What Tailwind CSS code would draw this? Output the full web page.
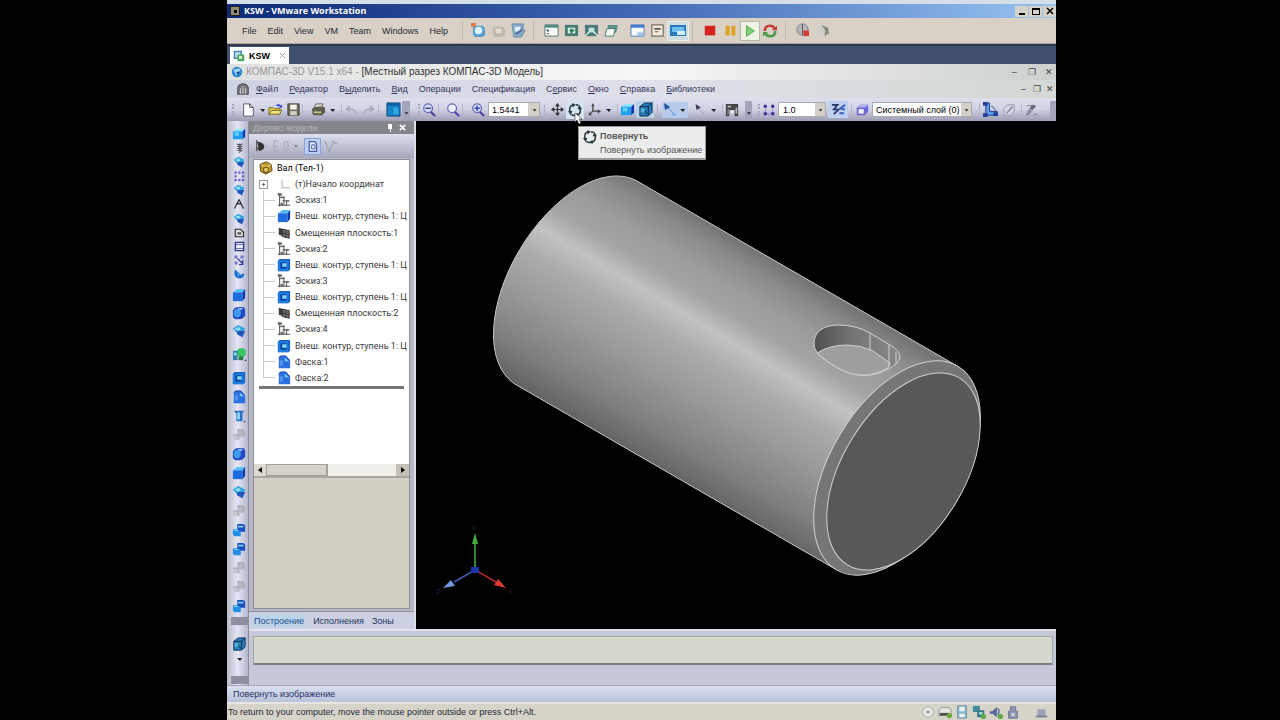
<!DOCTYPE html>
<html lang="ru">
<head>
  <meta charset="UTF-8">
  <meta name="viewport" content="width=device-width, initial-scale=1.0">
  <script src="https://cdn.jsdelivr.net/npm/@tailwindcss/browser@4"></script>
  <title>KSW - VMware Workstation</title>
</head>
<body class="bg-black font-['Liberation_Sans',Arial,sans-serif] text-[9px] leading-3 text-gray-800">

<!-- icon sprite -->
<svg class="hidden" xmlns="http://www.w3.org/2000/svg">
  <symbol id="cube" viewBox="0 0 16 16"><path d="M1 5l5-4h9l-3 4z" fill="#58c0f8"/><path d="M1 5h11v10H1z" fill="#1c6ce0"/><path d="M12 5l3-4v10l-3 4z" fill="#0c3aa8"/></symbol>
  <symbol id="cube-cyan" viewBox="0 0 16 16"><path d="M1 5l5-3h9l-3 3z" fill="#8fe4ff"/><path d="M1 5h11v9H1z" fill="#1ea0f0"/><path d="M12 5l3-3v9l-3 3z" fill="#1238b8"/><path d="M3 6h5v4H3z" fill="#60d0ff"/></symbol>
  <symbol id="cube-wire" viewBox="0 0 16 16"><path d="M2 5l5-4h8v10l-4 4H2z" fill="#2a7cb8" stroke="#102c50"/><path d="M2 5h9v9M11 5l4-4M6 8l4 5" fill="none" stroke="#0d2440"/><path d="M3 7h4v4H3z" fill="#55b9d9"/></symbol>
  <symbol id="cubes" viewBox="0 0 16 16"><path d="M6 1h7l2 2v7H8L6 8z" fill="#1c4cc0"/><path d="M1 7h6l3 2v6H3l-2-2z" fill="#1f8fe8"/><path d="M7 3h6v2H7zM2 8h5v1H2z" fill="#7fd0ff"/></symbol>
  <symbol id="cubes-gray" viewBox="0 0 16 16"><path d="M6 2h7l2 2v6H8L6 8z" fill="#b8b8c3"/><path d="M1 8h6l2 2v4H3l-2-1z" fill="#c8c8d2"/><path d="M6 2h7v6M1 8h6v5" fill="none" stroke="#a0a0ac"/></symbol>
  <symbol id="cut" viewBox="0 0 16 16"><path d="M1 3l2-2h12v12l-2 2H1z" fill="#1763c8"/><path d="M1 3h12v12H1z" fill="#1e7be0"/><path d="M4 5h7v7H4z" fill="#083c94"/><path d="M6 6h5v4H6z" fill="#7edcff"/></symbol>
  <symbol id="cyl" viewBox="0 0 16 16"><path d="M1 5q1-3 5-4h7q2 1 2 4v6q-3 4-7 4H4q-3-1-3-3z" fill="#2249c4"/><ellipse cx="6" cy="8" rx="4" ry="5" fill="#3e9cf0"/><path d="M6 2h7l-3 3z" fill="#8fbcff"/></symbol>
  <symbol id="chamfer" viewBox="0 0 16 16"><path d="M2 3l2-2h6l5 5v9H2z" fill="#2b6fe0"/><path d="M9 3l5 4H9z" fill="#85ccff"/><path d="M2 3l2-2h6l4 5" fill="none" stroke="#1238a0"/><path d="M3 6h4v6H3z" fill="#4d93f2"/></symbol>
  <symbol id="blob" viewBox="0 0 16 16"><path d="M1 5l6-4 8 4-2 5-6 2z" fill="#2fa5dd"/><path d="M6 8l9 0-3 7-6-3z" fill="#2455b8"/><path d="M3 5l5-2 2 3-3 2z" fill="#8fdcf5"/></symbol>
  <symbol id="green" viewBox="0 0 16 16"><circle cx="10" cy="6" r="5" fill="#39c764"/><path d="M1 4h5v10H1z" fill="#2d7fb0"/><path d="M2 6h3v3H2z" fill="#9bdce0"/><path d="M7 10h5v4H7z" fill="#277c48"/><path d="M13 15l2-2v2z" fill="#222"/></symbol>
  <symbol id="sketch" viewBox="0 0 16 16"><path d="M3 1v14M1 14h14M3 5h5v9M11 9v5M1 2h5M6 9h6" fill="none" stroke="#3c3c3c"/><path d="M1 0h4v3H1zM5 4h4v2H5zM10 8h4v2h-4zM4 11h3v3H4z" fill="#6d6d6d"/></symbol>
  <symbol id="plane" viewBox="0 0 16 16"><path d="M2 2l7 2v8L2 10z" fill="#3c3c3c"/><path d="M6 4l8 1v9l-8-2z" fill="#6d6d6d" stroke="#2d2d2d"/><path d="M10 5v8M6 8l8 2" stroke="#333"/></symbol>
  <symbol id="part" viewBox="0 0 16 16"><path d="M1 4l7-3 6 3 1 7-7 4-6-3z" fill="#c39a2d" stroke="#4d3a0a"/><path d="M2 4l6 3 6-3" fill="none" stroke="#f1dd80"/><circle cx="8" cy="10" r="3" fill="#e5c861" stroke="#4d3a0a"/></symbol>
  <symbol id="origin" viewBox="0 0 16 16"><path d="M5 2v10h10" fill="none" stroke="#a5a5a5"/><path d="M5 12l-3 2" stroke="#ccc"/></symbol>
  <symbol id="spring" viewBox="0 0 16 16"><path d="M4 2h7l-5 3h5L6 8h5l-5 3h5l-4 3" fill="none" stroke="#555" stroke-width="1.5"/></symbol>
  <symbol id="grid" viewBox="0 0 16 16"><path d="M2 2h3v3H2zM7 2h3v3H7zM12 2h3v3h-3zM2 7h3v3H2zM12 7h3v3h-3zM7 12h3v3H7zM2 12h3v3H2zM12 12h3v3h-3z" fill="#6465cc"/></symbol>
  <symbol id="compass" viewBox="0 0 16 16"><path d="M8 2L2 14M8 2l6 12M4 9q4-3 8 0" fill="none" stroke="#333" stroke-width="1.7"/></symbol>
  <symbol id="note" viewBox="0 0 16 16"><path d="M3 3h7l4 4v6H3z" fill="#ddd" stroke="#333" stroke-width="1.6"/><path d="M6 7h5v3H6z" fill="#555"/></symbol>
  <symbol id="table" viewBox="0 0 16 16"><path d="M2 2h12v12H2z" fill="#e8ecff" stroke="#303a8c" stroke-width="2"/><path d="M2 5h12M2 11h12" stroke="#303a8c"/></symbol>
  <symbol id="link" viewBox="0 0 16 16"><path d="M2 2h4v4H2zM10 2h4v4h-4zM2 10h4v4H2z" fill="#7078c8"/><path d="M6 6l7 7M13 8v6H8" fill="none" stroke="#27359a" stroke-width="1.6"/></symbol>
  <symbol id="swirl" viewBox="0 0 16 16"><path d="M3 2q-4 10 5 12 7 0 7-7l-5 2-2-3z" fill="#236fd0"/><path d="M4 3l4 4-1 4" fill="none" stroke="#9cd6ff"/></symbol>
  <symbol id="cup" viewBox="0 0 16 16"><path d="M2 2h12l-2 3v9H5V5z" fill="#2e6fc5"/><path d="M6 4h3v8H6z" fill="#8fdcff"/><path d="M13 15l2-2v2z" fill="#222"/></symbol>

  <symbol id="new" viewBox="0 0 16 16"><path d="M3 1h7l4 4v10H3z" fill="#fff" stroke="#555"/><path d="M10 1v4h4" fill="none" stroke="#333"/></symbol>
  <symbol id="open" viewBox="0 0 16 16"><path d="M1 6h5l1 1h6v6H1z" fill="#dfc547" stroke="#77702d"/><path d="M1 13l3-4h11l-3 4z" fill="#f1e27e" stroke="#77702d"/><path d="M8 4q3-4 6 0l1-2v4h-4l2-1" fill="#3f52c4"/></symbol>
  <symbol id="save" viewBox="0 0 16 16"><path d="M1 1h14v14H1z" fill="#6d6c58" stroke="#3a3a32"/><path d="M4 2h8v6H4z" fill="#f6f6f0"/><path d="M4 10h8v5H4z" fill="#d2d2c4"/></symbol>
  <symbol id="print" viewBox="0 0 16 16"><path d="M5 2h8l-2 5H3z" fill="#d8d8ce" stroke="#666"/><path d="M1 8q1-3 6-3 6-1 8 1v5l-3 3H2z" fill="#5c5c4c"/><path d="M3 10h8v2H3z" fill="#c4c28c"/></symbol>
  <symbol id="undo" viewBox="0 0 16 16"><path d="M13 12q0-6-9-5M7 3L3 7l4 3" fill="none" stroke="#a9aac0" stroke-width="1.8"/></symbol>
  <symbol id="redo" viewBox="0 0 16 16"><path d="M3 12q0-6 9-5M9 3l4 4-4 3" fill="none" stroke="#a9aac0" stroke-width="1.8"/></symbol>
  <symbol id="panel" viewBox="0 0 16 16"><path d="M1 1h14v14H1z" fill="#1586c8" stroke="#0c4374"/><path d="M2 2h12v2H2z" fill="#0e5fa8"/><path d="M8 6h5v7H8z" fill="#30a8e0"/></symbol>
  <symbol id="zoom-out" viewBox="0 0 16 16"><circle cx="7" cy="6" r="5" fill="#d4dcf8" stroke="#6a6bb4" stroke-width="1.5"/><path d="M4 6h6" stroke="#35366e" stroke-width="1.6"/><path d="M10 10l5 5" stroke="#4142a0" stroke-width="2.4"/></symbol>
  <symbol id="zoom" viewBox="0 0 16 16"><circle cx="7" cy="6" r="5" fill="#eef1ff" stroke="#6a6bb4" stroke-width="1.5"/><path d="M10 10l5 5" stroke="#4142b0" stroke-width="2.4"/></symbol>
  <symbol id="zoom-in" viewBox="0 0 16 16"><circle cx="7" cy="6" r="5" fill="#d4dcf8" stroke="#6a6bb4" stroke-width="1.5"/><path d="M4 6h6M7 3v6" stroke="#3442c0" stroke-width="1.6"/><path d="M10 10l5 5" stroke="#4142a0" stroke-width="2.4"/></symbol>
  <symbol id="move" viewBox="0 0 16 16"><path d="M8 1v14M1 8h14" stroke="#333" stroke-width="1.5"/><path d="M8 0l3 4H5zM8 16l3-4H5zM0 8l4-3v6zM16 8l-4-3v6z" fill="#333"/></symbol>
  <symbol id="rotate" viewBox="0 0 16 16"><path d="M6 2Q2 3 2 7v3M4 13q2 2 5 1M10 14q4-1 4-5V6M12 3q-1-1-3-1" fill="none" stroke="#2b3c40" stroke-width="1.8"/><path d="M5 0l4 2-4 3zM0 9h5l-2 5zM11 16l-4-2 4-3zM16 7h-5l2-5z" fill="#2b3c40"/></symbol>
  <symbol id="axes" viewBox="0 0 16 16"><path d="M6 2v8h9M6 10l-4 4" fill="none" stroke="#444" stroke-width="1.6"/><path d="M4 4l2-4 2 4zM12 8l4 2-4 3zM1 11v4h4z" fill="#444"/></symbol>
  <symbol id="snap" viewBox="0 0 16 16"><path d="M3 3l10 10" stroke="#5679bb" stroke-dasharray="2 1"/><path d="M2 1l6 4-5 3z" fill="#244ba0"/><path d="M10 11h4v3h-4z" fill="#8bb4e8"/></symbol>
  <symbol id="snap-gray" viewBox="0 0 16 16"><path d="M3 3l10 10" stroke="#8b8ba5" stroke-dasharray="2 1"/><path d="M3 1l6 4-5 3z" fill="#3c3c58"/></symbol>
  <symbol id="section" viewBox="0 0 16 16"><path d="M1 1h14v14h-4V8H5v7H1z" fill="#444"/><path d="M3 3h4v2H3zM12 5h2v7h-2zM3 7h1v6H3z" fill="#bbb"/><path d="M7 9h3v3H7z" fill="#eee"/></symbol>
  <symbol id="points" viewBox="0 0 16 16"><path d="M3 3v10h10V3" fill="none" stroke="#8e7ecb"/><path d="M1 1h4v4H1zM11 1h4v4h-4zM1 11h4v4H1zM11 11h4v4h-4z" fill="#3e2d94"/></symbol>
  <symbol id="swap" viewBox="0 0 16 16"><path d="M1 3h6L3 8h5l-5 5" fill="none" stroke="#25356c" stroke-width="1.8"/><path d="M15 3l-5 4 5 1M9 12h5" fill="none" stroke="#3a5fc0" stroke-width="2"/></symbol>
  <symbol id="layer" viewBox="0 0 16 16"><path d="M2 6l4-4h9v8l-4 4H2z" fill="#6c6ad8"/><path d="M4 7h6v5H4z" fill="#f2f2ff"/><path d="M6 2h9l-3 3H4z" fill="#b4b2f8"/></symbol>
  <symbol id="corner" viewBox="0 0 16 16"><path d="M3 1v13h12v-4H7V1z" fill="#59a4e4" stroke="#1e3680"/><path d="M0 0h5v4H0zM0 12h5v4H0zM11 11h5v4h-5z" fill="#26409a"/><path d="M9 4l5 5" stroke="#7a86b8" stroke-width="1.4"/></symbol>
  <symbol id="ghost" viewBox="0 0 16 16"><path d="M2 6l4-4h8v7l-4 5H2z" fill="#d4d4e4" stroke="#9696ae"/><path d="M5 12l7-8" stroke="#858598" stroke-width="1.6"/></symbol>
  <symbol id="brush" viewBox="0 0 16 16"><path d="M2 14l3-7 5 2-5 5z" fill="#8b8ba4"/><path d="M6 7l3-5 5 1-4 5" fill="#66667c"/><path d="M3 3h6M11 13h4" stroke="#777"/></symbol>

  <symbol id="vm-power" viewBox="0 0 16 16"><path d="M2 3h11l2 3v7l-3 2H4l-2-3z" fill="#5c9ed0"/><circle cx="8" cy="8" r="4" fill="#dff3fa"/><path d="M0 0h5v4H0z" fill="#df763e"/></symbol>
  <symbol id="vm-gray" viewBox="0 0 16 16"><path d="M2 4h11l2 3v6l-3 2H4l-2-3z" fill="#bdb9ae"/><path d="M5 6h6v5H5z" fill="#e4e0d6"/></symbol>
  <symbol id="vm-snap" viewBox="0 0 16 16"><path d="M1 1h12v5l2 2-4 7H3z" fill="#86a9c6" stroke="#6c8eac"/><path d="M4 4h6v5H4z" fill="#e0f0fb"/><path d="M5 12l7-5" stroke="#55689c" stroke-width="2"/></symbol>
  <symbol id="vm-side" viewBox="0 0 16 16"><path d="M1 2h14v12H1z" fill="#f8fbf8" stroke="#5a7670"/><path d="M1 2h14v3H1z" fill="#518d86"/><path d="M3 7h2v2H3zM3 11h2v1H3z" fill="#345"/></symbol>
  <symbol id="vm-full" viewBox="0 0 16 16"><path d="M1 2h14v12H1z" fill="#487b72"/><path d="M4 5h8v6H4z" fill="#d8f0e8"/><path d="M8 6v5M6 8h5" stroke="#208050" stroke-width="2"/></symbol>
  <symbol id="vm-unity" viewBox="0 0 16 16"><path d="M1 2h14v12H1z" fill="#4b7a7a"/><path d="M5 5h6v5H5z" fill="#c3e0da"/><path d="M1 14l5-5M15 14l-5-5" stroke="#e9f3ef" stroke-width="1.4"/></symbol>
  <symbol id="vm-multi" viewBox="0 0 16 16"><path d="M4 2h11l-2 8H4z" fill="#5b918a"/><path d="M3 6h9l-2 8H1z" fill="#f3f8f3" stroke="#4b7a70"/></symbol>
  <symbol id="vm-win" viewBox="0 0 16 16"><path d="M1 2h14v12H1z" fill="#f5f8ff" stroke="#5b7baa"/><path d="M1 2h14v3H1z" fill="#3f7dd0"/><path d="M8 10h6v4H8z" fill="#9bc3e8"/></symbol>
  <symbol id="vm-sum" viewBox="0 0 16 16"><path d="M1 1h14v14H1z" fill="#eee9dd" stroke="#777166" stroke-width="1.5"/><path d="M4 5h8v2H4zM5 9h4v1H5z" fill="#655"/></symbol>
  <symbol id="vm-console" viewBox="0 0 16 16"><path d="M0 2h16v11H0z" fill="#2b79bd"/><path d="M2 4h12v5H2z" fill="#6ec1ef"/><path d="M7 8h8v4H7z" fill="#d5ecfa"/></symbol>
  <symbol id="stop" viewBox="0 0 16 16"><path d="M2 2h12v11H2z" fill="#d52420"/></symbol>
  <symbol id="pause" viewBox="0 0 16 16"><path d="M2 2h5v12H2zM9 2h5v12H9z" fill="#dda227"/></symbol>
  <symbol id="play" viewBox="0 0 16 16"><path d="M4 2l9 6-9 6z" fill="#7fcf78" stroke="#4ba34b"/></symbol>
  <symbol id="reset" viewBox="0 0 16 16"><path d="M2 8q0-6 6-6 4 0 6 4" fill="none" stroke="#c5403a" stroke-width="3"/><path d="M14 8q0 6-6 6-4 0-6-4" fill="none" stroke="#4f9a4c" stroke-width="3"/><path d="M10 7h6V2z" fill="#c5403a"/><path d="M6 9H0v5z" fill="#4f9a4c"/></symbol>
  <symbol id="rec" viewBox="0 0 16 16"><circle cx="8" cy="7" r="6" fill="#b5b7bc" stroke="#7c7f86"/><path d="M8 1v12" stroke="#555"/><path d="M9 8h6v6H9z" fill="#d63a34"/></symbol>
  <symbol id="replay" viewBox="0 0 16 16"><path d="M1 9q0-6 6-7l7 3 1 6-5 3H3z" fill="#d1cfc8"/><path d="M7 2l7 3 1 6-5 3 1-6z" fill="#858a80"/></symbol>
  <symbol id="vm-logo" viewBox="0 0 16 16"><path d="M2 2h9v9H2z" fill="#c8e3e8" stroke="#3d86b4" stroke-width="2"/><path d="M6 6h9v9H6z" fill="#4aa85e"/><path d="M8 8h4v4H8z" fill="#d9f0c8"/></symbol>
  <symbol id="kompas" viewBox="0 0 16 16"><circle cx="8" cy="8" r="7" fill="#2a86cf"/><path d="M3 5l8-2 2 5-6 5z" fill="#9fd9f8"/><path d="M7 8l6-1-4 6z" fill="#1b54a2"/></symbol>
  <symbol id="gear" viewBox="0 0 16 16"><path d="M2 14V6q1-4 6-4t6 4v8z" fill="#77757a" stroke="#3c3c3f"/><path d="M5 14V7M8 14V5M11 14V7" stroke="#ddd"/></symbol>
  <symbol id="disc" viewBox="0 0 16 16"><circle cx="8" cy="8" r="6" fill="#eceeec" stroke="#a5a8aa"/><circle cx="8" cy="8" r="2" fill="#909a9a"/></symbol>
  <symbol id="drive" viewBox="0 0 16 16"><path d="M1 6l3-3h9l2 3v6H1z" fill="#e4e6e0" stroke="#8b8e88"/><path d="M2 9h11v3H2z" fill="#4d524d"/><circle cx="13" cy="12" r="3" fill="#6aa83c"/></symbol>
  <symbol id="floppy" viewBox="0 0 16 16"><path d="M3 1h10v14H3z" fill="#8fb8cc" stroke="#64899e"/><path d="M5 2h6v5H5zM5 10h6v4H5z" fill="#e8f3f8"/></symbol>
  <symbol id="net" viewBox="0 0 16 16"><path d="M1 1h8v7H1z" fill="#3f8d9f"/><path d="M6 6h8v8H6z" fill="#3b7688"/><path d="M8 8h4v3H8z" fill="#9bd6dc"/><circle cx="13" cy="13" r="3" fill="#5ea846"/></symbol>
  <symbol id="sound" viewBox="0 0 16 16"><path d="M1 7h3l5-5v12l-5-4H1z" fill="#56699a"/><path d="M10 4q3 3 0 7" fill="none" stroke="#56699a" stroke-width="1.6"/><circle cx="13" cy="13" r="3" fill="#5ea846"/></symbol>
  <symbol id="usb" viewBox="0 0 16 16"><path d="M5 2h6v5h2v8H3V7h2z" fill="#8c95b0" stroke="#68708c"/><path d="M6 9h4v4H6z" fill="#c8cede"/></symbol>
  <symbol id="caret" viewBox="0 0 8 16"><path d="M2 7h5l-2 3z" fill="#222"/></symbol>
</svg>

<div class="h-screen grid grid-cols-[227fr_829fr_224fr] overflow-hidden">
<main class="col-start-2 min-w-0 flex flex-col bg-[#d6d2c8] border-t-4 border-[#d5dfe8]">

  <!-- VMware title bar -->
  <header class="h-[14px] shrink-0 flex items-center gap-1 pl-[3px] bg-linear-to-r from-[#0c2a78] via-[#4468b4] to-[#98c4f0] text-white">
    <span class="size-[10px] bg-[#8d8d70] border border-[#222] flex items-center justify-center"><span class="size-[3px] bg-black"></span></span>
    <h1 class="font-['Open_Sans',sans-serif] font-bold grow">KSW - VMware Workstation</h1>
    <div class="flex gap-px text-black">
      <button aria-label="Minimize" class="w-[13px] h-[11px] bg-[#d6d2c8] flex items-end justify-center pb-[2px]"><span class="w-[6px] h-[2px] bg-black"></span></button>
      <button aria-label="Restore" class="w-[13px] h-[11px] bg-[#d6d2c8] flex items-center justify-center"><span class="w-2 h-[7px] border border-t-2 border-black"></span></button>
      <button aria-label="Close" class="w-[13px] h-[11px] bg-[#d6d2c8] flex items-center justify-center"><svg class="size-2" viewBox="0 0 8 8"><path d="M1 1l6 6M7 1L1 7" stroke="#000" stroke-width="1.6"/></svg></button>
    </div>
  </header>

  <!-- VMware menu and toolbar -->
  <div class="h-[26px] shrink-0 flex items-center bg-[#d9d1c6] border-b border-[#aaa49c]">
    <nav class="w-[235px] shrink-0 flex gap-[11px] pl-[15px]">
      <button>File</button><button>Edit</button><button>View</button><button>VM</button><button>Team</button><button>Windows</button><button>Help</button>
    </nav>
    <span class="w-[6px] h-5 border-l border-[#c0bab0]"></span>
    <button aria-label="Power" class="w-5 flex justify-center"><svg class="size-[15px]"><use href="#vm-power"/></svg></button>
    <button aria-label="Suspend" class="w-5 flex justify-center"><svg class="size-[15px]"><use href="#vm-gray"/></svg></button>
    <button aria-label="Snapshot" class="w-5 flex justify-center"><svg class="size-[15px]"><use href="#vm-snap"/></svg></button>
    <span class="w-[6px] h-5 border-r border-[#c0bab0]"></span><span class="w-[7px]"></span>
    <button aria-label="Sidebar" class="w-5 flex justify-center"><svg class="size-[15px]"><use href="#vm-side"/></svg></button>
    <button aria-label="Full screen" class="w-5 flex justify-center"><svg class="size-[15px]"><use href="#vm-full"/></svg></button>
    <button aria-label="Unity" class="w-5 flex justify-center"><svg class="size-[15px]"><use href="#vm-unity"/></svg></button>
    <button aria-label="Multiple monitors" class="w-5 flex justify-center"><svg class="size-[15px]"><use href="#vm-multi"/></svg></button>
    <span class="w-[6px]"></span>
    <button aria-label="Quick switch" class="w-5 flex justify-center"><svg class="size-[15px]"><use href="#vm-win"/></svg></button>
    <button aria-label="Summary" class="w-5 flex justify-center"><svg class="size-[13px]"><use href="#vm-sum"/></svg></button>
    <button aria-label="Console" class="w-[22px] py-px flex justify-center bg-[#cddde2] border border-[#e9eef0]"><svg class="size-4"><use href="#vm-console"/></svg></button>
    <span class="w-1 h-5 border-r border-[#c0bab0]"></span><span class="w-[7px]"></span>
    <button aria-label="Stop" class="w-5 flex justify-center"><svg class="size-[14px]"><use href="#stop"/></svg></button>
    <button aria-label="Pause" class="w-5 flex justify-center"><svg class="size-[13px]"><use href="#pause"/></svg></button>
    <button aria-label="Play" class="w-5 py-[2px] flex justify-center bg-[#eef3e6] border border-[#b8b8a8]"><svg class="size-[14px]"><use href="#play"/></svg></button>
    <button aria-label="Reset" class="w-5 flex justify-center"><svg class="size-[14px]"><use href="#reset"/></svg></button>
    <span class="w-[6px] h-5 border-r border-[#c0bab0]"></span><span class="w-[6px]"></span>
    <button aria-label="Record" class="w-5 flex justify-center"><svg class="size-[15px]"><use href="#rec"/></svg></button>
    <button aria-label="Replay" class="w-5 flex justify-center"><svg class="size-[15px]"><use href="#replay"/></svg></button>
  </div>

  <!-- VM tabs -->
  <div class="h-5 shrink-0 flex items-end pl-[3px] bg-[#40506e] border-t-2 border-[#30394a]">
    <button class="h-[17px] w-[59px] flex items-center gap-1 px-[3px] bg-white font-bold text-black">
      <svg class="size-3"><use href="#vm-logo"/></svg>KSW<svg class="size-[7px] ml-auto" viewBox="0 0 8 8"><path d="M1 1l6 6M7 1L1 7" stroke="#999"/></svg>
    </button>
  </div>

  <!-- KOMPAS window title -->
  <div class="h-4 shrink-0 flex items-center gap-[3px] pl-[4px] pr-[3px] bg-linear-to-r from-[#dfe0e0] via-[#f6f7f7] to-[#cdd1ce]">
    <svg class="size-3"><use href="#kompas"/></svg>
    <p class="grow text-[10px] text-[#999]">КОМПАС-3D V15.1 x64 - <span class="text-[#333]">[Местный разрез КОМПАС-3D Модель]</span></p>
    <div class="flex gap-[8px] text-[#444]"><button class="w-[9px]" aria-label="Свернуть">–</button><button class="w-[9px]" aria-label="Восстановить">❐</button><button class="w-[9px]" aria-label="Закрыть">✕</button></div>
  </div>

  <!-- KOMPAS menu -->
  <div class="h-[18px] shrink-0 flex items-center pl-[9px] pr-[2px] bg-linear-to-r from-[#cfd2e2] via-[#dfe0ea] to-[#d3d8d3] text-[#34345c]">
    <svg class="size-[14px] mr-[6px]"><use href="#gear"/></svg>
    <nav class="grow flex gap-[11px]">
      <button><u>Ф</u>айл</button><button><u>Р</u>едактор</button><button>В<u>ы</u>делить</button><button><u>В</u>ид</button><button>Операции</button><button>Спецификация</button><button>С<u>е</u>рвис</button><button><u>О</u>кно</button><button><u>С</u>правка</button><button><u>Б</u>иблиотеки</button>
    </nav>
    <div class="flex gap-[4px] text-[#444]"><button class="w-[9px]" aria-label="Свернуть документ">–</button><button class="w-[9px]" aria-label="Восстановить документ">❐</button><button class="w-[9px]" aria-label="Закрыть документ">✕</button></div>
  </div>

  <!-- KOMPAS toolbar -->
  <div class="relative z-10 h-[23px] shrink-0 flex items-center pl-px bg-linear-to-b from-[#dfe0ee] via-[#d0d1e4] to-[#9c9cb4] *:shrink-0">
    <span class="w-[6px] h-3 border-r-2 border-dotted border-[#a8a8bc]"></span><span class="w-1"></span>
    <button aria-label="Создать" class="w-5 flex justify-center"><svg class="size-[14px]"><use href="#new"/></svg></button>
    <svg class="w-2 h-4"><use href="#caret"/></svg>
    <button aria-label="Открыть" class="w-[18px] flex justify-center"><svg class="size-[15px]"><use href="#open"/></svg></button>
    <button aria-label="Сохранить" class="w-[18px] flex justify-center"><svg class="size-[13px]"><use href="#save"/></svg></button>
    <span class="w-[6px] h-3 border-l border-[#b4b4c6]"></span>
    <button aria-label="Печать" class="w-5 flex justify-center"><svg class="size-[15px]"><use href="#print"/></svg></button>
    <svg class="w-2 h-4"><use href="#caret"/></svg>
    <span class="w-[6px] h-3 border-r border-[#b4b4c6]"></span>
    <button aria-label="Отменить" class="w-[18px] flex justify-center"><svg class="size-[14px]"><use href="#undo"/></svg></button>
    <button aria-label="Повторить" class="w-[18px] flex justify-center"><svg class="size-[14px]"><use href="#redo"/></svg></button>
    <span class="w-[6px] h-3 border-l border-[#b4b4c6]"></span>
    <button aria-label="Панель" class="w-[18px] flex justify-center"><svg class="size-[15px]"><use href="#panel"/></svg></button>
    <span class="w-2 h-[18px] bg-[#a4a4ba] flex items-end justify-center"><svg class="w-2 h-3"><use href="#caret"/></svg></span><span class="w-1"></span>
    <span class="w-[6px] h-3 border-r-2 border-dotted border-[#a8a8bc]"></span>
    <button aria-label="Уменьшить" class="w-[18px] flex justify-center"><svg class="size-[14px]"><use href="#zoom-out"/></svg></button>
    <span class="w-[6px] h-3 border-l border-[#b4b4c6]"></span>
    <button aria-label="Масштаб рамкой" class="w-[18px] flex justify-center"><svg class="size-[14px]"><use href="#zoom"/></svg></button>
    <span class="w-[6px] h-3 border-l border-[#b4b4c6]"></span>
    <button aria-label="Увеличить" class="w-5 flex justify-center"><svg class="size-[14px]"><use href="#zoom-in"/></svg></button>
    <label class="w-[52px] h-[15px] flex bg-white border border-[#aaa] text-black">
      <select aria-label="Масштаб" class="appearance-none grow pl-[3px]"><option>1.5441</option></select>
      <span class="w-[11px] bg-[#d4d0c8] flex justify-center items-center"><svg class="w-2 h-3"><use href="#caret"/></svg></span>
    </label>
    <span class="w-[5px] h-3 border-r border-[#b4b4c6]"></span><span class="w-[3px]"></span>
    <button aria-label="Сдвинуть" class="w-[18px] flex justify-center"><svg class="size-[13px]"><use href="#move"/></svg></button>
    <button aria-label="Повернуть" class="relative w-[18px] py-[2px] flex justify-center bg-[#d3e4f0]">
      <svg class="size-[14px]"><use href="#rotate"/></svg>
      <svg class="absolute left-2 top-3 w-[9px] h-3" viewBox="0 0 9 12"><path d="M1 0v9l2-2 2 4 2-1-2-4h3z" fill="#fff" stroke="#333" stroke-width=".6"/></svg>
    </button>
    <button aria-label="Ориентация" class="w-5 flex justify-center"><svg class="size-[13px]"><use href="#axes"/></svg></button>
    <svg class="w-2 h-4"><use href="#caret"/></svg>
    <span class="w-[6px] h-3 border-r border-[#b4b4c6]"></span>
    <button aria-label="Полутоновое" class="w-[18px] flex justify-center"><svg class="size-[15px]"><use href="#cube-cyan"/></svg></button>
    <button aria-label="С каркасом" class="w-[18px] py-px flex justify-center bg-[#b9d4ea]"><svg class="size-[15px]"><use href="#cube-wire"/></svg></button>
    <span class="w-1 h-3 border-r border-[#b4b4c6]"></span><span class="w-1"></span>
    <button aria-label="Упрощения" class="w-[26px] flex items-center bg-[#b7cbec]"><svg class="size-[16px]"><use href="#snap"/></svg><svg class="w-2 h-4"><use href="#caret"/></svg></button>
    <span class="w-[3px]"></span>
    <button aria-label="Привязки" class="w-[18px] flex justify-center"><svg class="size-[14px]"><use href="#snap-gray"/></svg></button>
    <svg class="w-2 h-4"><use href="#caret"/></svg>
    <span class="w-[6px] h-3 border-r border-[#b4b4c6]"></span>
    <button aria-label="Сечение" class="w-[18px] flex justify-center"><svg class="size-[14px]"><use href="#section"/></svg></button>
    <span class="w-1"></span><span class="w-[7px] h-[18px] bg-[#a4a4ba] flex items-end justify-center"><svg class="w-2 h-3"><use href="#caret"/></svg></span>
    <span class="w-[8px] h-3 border-r-2 border-dotted border-[#a8a8bc]"></span>
    <button aria-label="Узлы" class="w-[18px] flex justify-center"><svg class="size-[12px]"><use href="#points"/></svg></button>
    <label class="w-12 h-[15px] flex bg-white border border-[#aaa] text-black">
      <select aria-label="Шаг" class="appearance-none grow pl-1"><option>1.0</option></select>
      <span class="w-[10px] bg-[#d4d0c8] flex justify-center items-center"><svg class="w-2 h-3"><use href="#caret"/></svg></span>
    </label>
    <span class="w-[2px]"></span>
    <button aria-label="Округление" class="w-5 py-px flex justify-center bg-[#bfd0f0]"><svg class="size-[15px]"><use href="#swap"/></svg></button>
    <span class="w-1 h-3 border-r border-[#b4b4c6]"></span>
    <button aria-label="Слои" class="w-5 flex justify-center"><svg class="size-[14px]"><use href="#layer"/></svg></button>
    <label class="w-[100px] h-[15px] flex bg-white border border-[#aaa] text-black">
      <select aria-label="Слой" class="appearance-none grow pl-[3px]"><option>Системный слой (0)</option></select>
      <span class="w-[10px] bg-[#d4d0c8] flex justify-center items-center"><svg class="w-2 h-3"><use href="#caret"/></svg></span>
    </label>
    <span class="w-2 h-3 border-r border-[#b4b4c6]"></span>
    <button aria-label="Эскиз" class="w-5 flex justify-center"><svg class="size-[15px]"><use href="#corner"/></svg></button>
    <button aria-label="Перестроить" class="w-[18px] flex justify-center"><svg class="size-[14px]"><use href="#ghost"/></svg></button>
    <span class="w-1 h-3 border-r border-[#b4b4c6]"></span>
    <button aria-label="Свойства" class="w-[18px] flex justify-center"><svg class="size-[14px]"><use href="#brush"/></svg></button>
    <span class="ml-auto w-[6px] h-[18px] bg-[#a4a4ba]"></span>
  </div>

  <div class="grow min-h-0 flex">
    <!-- compact tool strip -->
    <aside class="w-[22px] shrink-0 flex flex-col items-center pl-[3px] bg-linear-to-r from-[#b9bac6] via-[#e4e6f6] to-[#b4b6cc] border-r border-[#8c8ea0]">
      <div class="pt-[6px] h-[159px] flex flex-col justify-between items-center">
        <svg class="size-[14px]"><use href="#cube-cyan"/></svg>
        <svg class="size-[11px]"><use href="#spring"/></svg>
        <svg class="size-3"><use href="#blob"/></svg>
        <svg class="size-3"><use href="#grid"/></svg>
        <svg class="size-3"><use href="#blob"/></svg>
        <svg class="size-3"><use href="#compass"/></svg>
        <svg class="size-3"><use href="#blob"/></svg>
        <svg class="size-3"><use href="#note"/></svg>
        <svg class="size-[11px]"><use href="#table"/></svg>
        <svg class="size-3"><use href="#link"/></svg>
        <svg class="size-3"><use href="#swirl"/></svg>
      </div>
      <div class="mt-2 flex flex-col gap-1 items-center">
        <svg class="size-[14px]"><use href="#cube"/></svg>
        <svg class="size-[14px]"><use href="#cyl"/></svg>
        <svg class="size-[14px]"><use href="#blob"/></svg>
      </div>
      <svg class="size-[15px] my-[9px]"><use href="#green"/></svg>
      <div class="h-[242px] flex flex-col justify-between items-center">
        <svg class="size-[14px]"><use href="#cut"/></svg>
        <svg class="size-[14px]"><use href="#chamfer"/></svg>
        <svg class="size-[14px]"><use href="#cup"/></svg>
        <svg class="size-[14px]"><use href="#cubes-gray"/></svg>
        <svg class="size-[14px]"><use href="#cyl"/></svg>
        <svg class="size-[14px]"><use href="#cube"/></svg>
        <svg class="size-[14px]"><use href="#blob"/></svg>
        <svg class="size-[14px]"><use href="#cubes-gray"/></svg>
        <svg class="size-[14px]"><use href="#cubes"/></svg>
        <svg class="size-[14px]"><use href="#cubes"/></svg>
        <svg class="size-[14px]"><use href="#cubes-gray"/></svg>
        <svg class="size-[14px]"><use href="#cubes-gray"/></svg>
        <svg class="size-[14px]"><use href="#cubes"/></svg>
      </div>
      <span class="mt-1 w-[17px] h-2 shrink-0 bg-[#8e8fa0]"></span>
      <svg class="size-[14px] mt-3 shrink-0"><use href="#cube-wire"/></svg>
      <svg class="w-2 h-4 shrink-0"><use href="#caret"/></svg>
      <span class="mt-auto mb-px w-[17px] h-2 shrink-0 bg-[#8e8fa0]"></span>
    </aside>

    <div class="grow min-w-0 flex flex-col bg-[#c6cad8]">
      <div class="grow min-h-0 flex">
        <!-- model tree -->
        <section class="w-[167px] shrink-0 flex flex-col bg-[#b6b8c6] border-r-2 border-[#dcdfea]">
          <div class="h-[13px] flex items-center pl-1 pr-2 gap-[6px] bg-[#85868c] text-[#b4b4b4]">
            <h2 class="grow">Дерево модели</h2>
            <button aria-label="Закрепить" class="w-[6px] h-2 flex flex-col items-center text-white"><span class="w-1 h-[5px] bg-white"></span><span class="w-px h-[3px] bg-white"></span></button>
            <button aria-label="Закрыть дерево"><svg class="size-[7px]" viewBox="0 0 8 8"><path d="M1 1l6 6M7 1L1 7" stroke="#fff" stroke-width="1.8"/></svg></button>
          </div>
          <div class="h-[24px] flex items-center pl-1 bg-linear-to-b from-[#dddff0] to-[#a5a7bc]">
            <svg class="size-[15px]" viewBox="0 0 16 16"><path d="M4 1v12M4 4h4M4 10h5" stroke="#333"/><path d="M5 3q7 1 7 5t-6 5z" fill="#333"/></svg>
            <svg class="w-[34px] h-4 ml-[2px]" viewBox="0 0 34 16"><path d="M4 3h4M4 3v10M4 8h4M4 13h4M14 4h4v8h-4z" fill="none" stroke="#a6a6ba"/><path d="M24 7h4l-2 3z" fill="#888"/></svg>
            <button aria-label="Структура" class="w-[17px] h-[17px] flex justify-center items-center bg-[#bccff3] border border-[#8aa3da]"><svg class="size-[13px]" viewBox="0 0 16 16"><path d="M4 2h7l2 3v9H4z" fill="#e6eefc" stroke="#4a61a8" stroke-width="1.6"/><path d="M7 6h4v5H7z" fill="none" stroke="#2f4690"/></svg></button>
            <svg class="size-4 ml-[2px]" viewBox="0 0 16 16"><path d="M2 3l4 10 4-8M9 3l5 3" fill="none" stroke="#a4a4b6" stroke-width="1.5"/></svg>
          </div>
          <div class="grow min-h-0 mx-1 mt-px flex flex-col bg-[#d2cfc4] border border-[#8e8f94]">
            <div class="bg-white">
              <div class="relative h-[304px] overflow-hidden pl-[5px] text-[#3a3a3a] font-[Roboto,'Liberation_Sans',sans-serif]">
                <ul class="h-[226px] grid auto-rows-fr whitespace-nowrap *:flex *:items-center">
                  <li class="gap-1 text-black"><svg class="size-[14px]"><use href="#part"/></svg>Вал (Тел-1)</li>
                  <li class="gap-1"><span class="size-[9px] border border-[#999] text-[8px] leading-[7px] text-center">+</span><svg class="size-[13px] ml-[6px]"><use href="#origin"/></svg>(т)Начало координат</li>
                  <li class="gap-1"><span class="w-3 ml-1 h-px bg-[#ccc] mr-[-2px]"></span><svg class="size-[14px]"><use href="#sketch"/></svg>Эскиз:1</li>
                  <li class="gap-1"><span class="w-3 ml-1 h-px bg-[#ccc] mr-[-2px]"></span><svg class="size-[14px]"><use href="#cube"/></svg>Внеш. контур, ступень 1: Ц</li>
                  <li class="gap-1"><span class="w-3 ml-1 h-px bg-[#ccc] mr-[-2px]"></span><svg class="size-[14px]"><use href="#plane"/></svg>Смещенная плоскость:1</li>
                  <li class="gap-1"><span class="w-3 ml-1 h-px bg-[#ccc] mr-[-2px]"></span><svg class="size-[14px]"><use href="#sketch"/></svg>Эскиз:2</li>
                  <li class="gap-1"><span class="w-3 ml-1 h-px bg-[#ccc] mr-[-2px]"></span><svg class="size-[14px]"><use href="#cut"/></svg>Внеш. контур, ступень 1: Ц</li>
                  <li class="gap-1"><span class="w-3 ml-1 h-px bg-[#ccc] mr-[-2px]"></span><svg class="size-[14px]"><use href="#sketch"/></svg>Эскиз:3</li>
                  <li class="gap-1"><span class="w-3 ml-1 h-px bg-[#ccc] mr-[-2px]"></span><svg class="size-[14px]"><use href="#cut"/></svg>Внеш. контур, ступень 1: Ц</li>
                  <li class="gap-1"><span class="w-3 ml-1 h-px bg-[#ccc] mr-[-2px]"></span><svg class="size-[14px]"><use href="#plane"/></svg>Смещенная плоскость:2</li>
                  <li class="gap-1"><span class="w-3 ml-1 h-px bg-[#ccc] mr-[-2px]"></span><svg class="size-[14px]"><use href="#sketch"/></svg>Эскиз:4</li>
                  <li class="gap-1"><span class="w-3 ml-1 h-px bg-[#ccc] mr-[-2px]"></span><svg class="size-[14px]"><use href="#cut"/></svg>Внеш. контур, ступень 1: Ц</li>
                  <li class="gap-1"><span class="w-3 ml-1 h-px bg-[#ccc] mr-[-2px]"></span><svg class="size-[14px]"><use href="#chamfer"/></svg>Фаска:1</li>
                  <li class="gap-1"><span class="w-3 ml-1 h-px bg-[#ccc] mr-[-2px]"></span><svg class="size-[14px]"><use href="#chamfer"/></svg>Фаска:2</li>
                </ul>
                <div class="h-[3px] mr-[5px] bg-[#77777a]"></div>
                <div class="absolute left-[9px] top-[30px] h-[188px] w-px bg-[#ccc]"></div>
              </div>
              <div class="h-[14px] flex bg-[#f0efea] border-b-2 border-[#a9a79f]">
                <button aria-label="Влево" class="w-3 bg-[#dcd9d0] flex items-center justify-center"><svg class="size-[6px]" viewBox="0 0 6 6"><path d="M5 0v6L1 3z"/></svg></button>
                <span class="w-[62px] bg-[#d6d2ca] border border-r-2 border-[#a3a19c]"></span>
                <button aria-label="Вправо" class="w-[13px] ml-auto bg-[#c4c1b8] flex items-center justify-center"><svg class="size-[6px]" viewBox="0 0 6 6"><path d="M1 0v6l4-3z"/></svg></button>
              </div>
            </div>
          </div>
          <div class="h-[18px] mt-[2px] flex items-center gap-2 px-1 bg-[#cbd1e3] border-t border-[#8e8f94] text-[#26345e]">
            <button class="px-px bg-[#bcd4ea] text-[#1e4f8c]">Построение</button>
            <button>Исполнения</button>
            <button>Зоны</button>
          </div>
        </section>

        <!-- 3D view -->
        <section class="relative grow min-w-0 bg-black">
          <svg class="w-full h-full" viewBox="416 121 640 508" preserveAspectRatio="xMidYMid meet">
            <defs>
              <linearGradient id="shaft" gradientUnits="userSpaceOnUse" x1="635.7" y1="180.3" x2="514.3" y2="383.7">
                <stop offset="0" stop-color="#767676"/><stop offset=".08" stop-color="#8c8c8c"/><stop offset=".18" stop-color="#9c9c9c"/><stop offset=".28" stop-color="#a4a4a4"/><stop offset=".38" stop-color="#c2c2c2"/><stop offset=".5" stop-color="#aaa"/><stop offset=".65" stop-color="#9a9a9a"/><stop offset=".85" stop-color="#808080"/><stop offset="1" stop-color="#626262"/>
              </linearGradient>
              <linearGradient id="slot" x1="0" y1="0" x2="1" y2="0"><stop offset="0" stop-color="#505050"/><stop offset=".5" stop-color="#777"/><stop offset="1" stop-color="#888"/></linearGradient>
            </defs>
            <path d="M635.7 180.3L957.7 366.3 836.3 569.7 514.3 383.7A118.5 66.2 -59 0 1 635.7 180.3z" fill="url(#shaft)" stroke="#c8c8c8"/>
            <ellipse cx="897" cy="468" rx="118.5" ry="66.2" transform="rotate(-59 897 468)" fill="#767676" stroke="#d0d0d0"/>
            <ellipse cx="903.5" cy="471.5" rx="109" ry="61" transform="rotate(-59 903.5 471.5)" fill="#585858" stroke="#d0d0d0"/>
            <path d="M814 344Q814 326 838 325q18 0 32 8l20 12q10 6 10 12-1 7-12 12-14 8-28 6-12 0-32-13-14-9-14-18z" fill="url(#slot)" stroke="#d0d0d0"/>
            <path d="M817 353q13-8 30-8 14 0 26 6l17 12-2 5q-14 8-28 7-12 0-32-13z" fill="#9e9e9e" stroke="#d0d0d0"/>
            <path d="M870 333v17M889 345v21M896 352v12" stroke="#d0d0d0"/>
            <g stroke-width="2">
              <path d="M475 570v-27" stroke="#2f8a2f"/><path d="M475 533l3 11h-6z" fill="#3fb03f"/>
              <path d="M475 570l21 12" stroke="#a82323"/><path d="M506 588l-12-3 4-6z" fill="#e03c30"/>
              <path d="M475 570l-21 12" stroke="#3a58a8"/><path d="M443 588l8-8 4 6z" fill="#6f98e0"/>
              <path d="M471 567h8v6h-8z" fill="#1f35b0"/>
            </g>
            <g font-size="7"><text x="472" y="531" fill="#143814">Y</text><text x="508" y="594" fill="#401212">X</text><text x="436" y="594" fill="#182450">Z</text></g>
          </svg>
          <div role="tooltip" class="absolute left-[162px] top-[5px] w-[128px] h-[34px] flex gap-[3px] pt-[3px] pl-1 bg-[#eceeed] border border-[#999] border-b-2 text-[#555]">
            <svg class="size-[14px] shrink-0"><use href="#rotate"/></svg>
            <div class="leading-[15px]"><p class="font-bold leading-[13px]">Повернуть</p><p class="whitespace-nowrap">Повернуть изображение</p></div>
          </div>
        </section>
      </div>

      <!-- property panel -->
      <div class="h-[56px] shrink-0 border-t-2 border-[#e3e3ee] bg-[#c4c8d8] pt-[5px] pl-1 pr-[3px]">
        <div class="h-[29px] bg-[#d7d8cd] border border-[#a5a5a8] border-b-2 border-b-[#7e8080]"></div>
      </div>
    </div>
  </div>

  <footer class="h-[17px] shrink-0 flex items-center pl-[6px] bg-linear-to-b from-[#dadff0] to-[#b9c2dd] border-t border-[#a3a7b5] text-[#26345e]">Повернуть изображение</footer>
  <footer class="h-[18px] shrink-0 flex items-center pl-px pr-2 bg-[#d6d3c8] border-t-2 border-[#e8e6df]">
    <p class="grow whitespace-nowrap">To return to your computer, move the mouse pointer outside or press Ctrl+Alt.</p>
    <div class="flex items-center gap-[3px]">
      <svg class="size-[14px]"><use href="#disc"/></svg>
      <svg class="size-[14px]"><use href="#drive"/></svg>
      <svg class="size-[14px]"><use href="#floppy"/></svg>
      <svg class="size-[14px]"><use href="#net"/></svg>
      <svg class="size-[14px]"><use href="#sound"/></svg>
      <svg class="size-[14px]"><use href="#usb"/></svg>
      <svg class="size-[13px] ml-3" viewBox="0 0 16 16"><path d="M3 4h10v9H3z" fill="#9ca3b8"/><path d="M1 13h14" stroke="#777f94" stroke-width="2"/></svg>
    </div>
  </footer>
</main>
</div>
</body>
</html>
